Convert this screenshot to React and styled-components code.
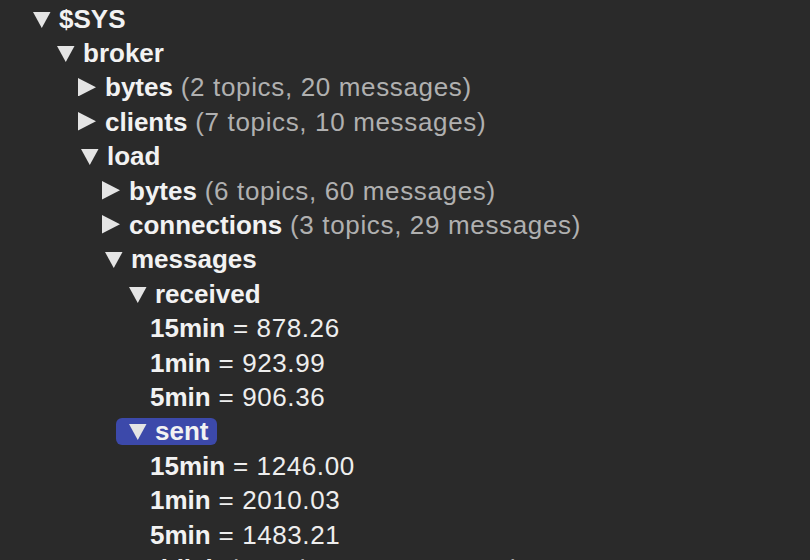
import React from "react";
import styled, { createGlobalStyle } from "styled-components";

const GlobalStyle = createGlobalStyle`
  html, body {
    margin: 0;
    padding: 0;
    background: #2a2a2a;
  }
  body {
    font-family: "Liberation Sans", Arial, Helvetica, sans-serif;
    overflow: hidden;
  }
`;

const tree = {
  name: "$SYS",
  open: true,
  children: [
    {
      name: "broker",
      open: true,
      children: [
        { name: "bytes", topics: 2, messages: 20 },
        { name: "clients", topics: 7, messages: 10 },
        {
          name: "load",
          open: true,
          children: [
            { name: "bytes", topics: 6, messages: 60 },
            { name: "connections", topics: 3, messages: 29 },
            {
              name: "messages",
              open: true,
              children: [
                {
                  name: "received",
                  open: true,
                  children: [
                    { name: "15min", value: "878.26" },
                    { name: "1min", value: "923.99" },
                    { name: "5min", value: "906.36" },
                  ],
                },
                {
                  name: "sent",
                  open: true,
                  selected: true,
                  children: [
                    { name: "15min", value: "1246.00" },
                    { name: "1min", value: "2010.03" },
                    { name: "5min", value: "1483.21" },
                  ],
                },
              ],
            },
            { name: "publish", topics: 3, messages: 30 },
          ],
        },
      ],
    },
  ],
};

const Tree = styled.div`
  height: 560px;
  padding: 1.5px 0 0 30px;
  box-sizing: border-box;
  color: #eeeeee;
  font-family: "Liberation Sans", Arial, Helvetica, sans-serif;
  font-size: 26px;
`;

const Row = styled.div`
  height: 34.42px;
  line-height: 34.42px;
  white-space: nowrap;
`;

const Children = styled.div`
  padding-left: 24px;
`;

// the highlight pill reaches past the row on both sides without moving the text
const Header = styled.span`
  display: inline-block;
  line-height: 27px;
  padding: 0 9px 0 10px;
  margin: 0 -9px 0 -10px;
  border-radius: 6px;
  background: ${(p) => (p.$selected ? "#3c49aa" : "transparent")};
`;

const Toggle = styled.svg`
  vertical-align: baseline;
  fill: #e4e4e4;
  margin-left: ${(p) => (p.$open ? "3px" : "0")};
  margin-right: ${(p) => (p.$open ? "8.5px" : "9px")};
`;

const Name = styled.span`
  font-weight: 700;
  color: #f2f2f2;
`;

const Count = styled.span`
  color: #b0b0b0;
  letter-spacing: 0.65px;
`;

const Value = styled.span`
  color: #eeeeee;
  letter-spacing: 0.6px;
`;

const Arrow = ({ open }) =>
  open ? (
    <Toggle $open width="17.5" height="16" viewBox="0 0 17.5 16">
      <polygon points="0,0 17.5,0 8.75,16" />
    </Toggle>
  ) : (
    <Toggle width="18" height="18.5" viewBox="0 0 18 18.5">
      <polygon points="0,0 18,9.25 0,18.5" />
    </Toggle>
  );

const Node = ({ node }) => {
  if (node.value !== undefined) {
    return (
      <Row>
        <Name>{node.name}</Name>
        <Value> = {node.value}</Value>
      </Row>
    );
  }
  return (
    <>
      <Row>
        <Header $selected={node.selected}>
          <Arrow open={node.open} />
          <Name>{node.name}</Name>
        </Header>
        {!node.open && (
          <Count>{` (${node.topics} topics, ${node.messages} messages)`}</Count>
        )}
      </Row>
      {node.open && (
        <Children>
          {node.children.map((child, i) => (
            <Node key={i} node={child} />
          ))}
        </Children>
      )}
    </>
  );
};

const App = () => (
  <>
    <GlobalStyle />
    <Tree>
      <Node node={tree} />
    </Tree>
  </>
);

export default App;
